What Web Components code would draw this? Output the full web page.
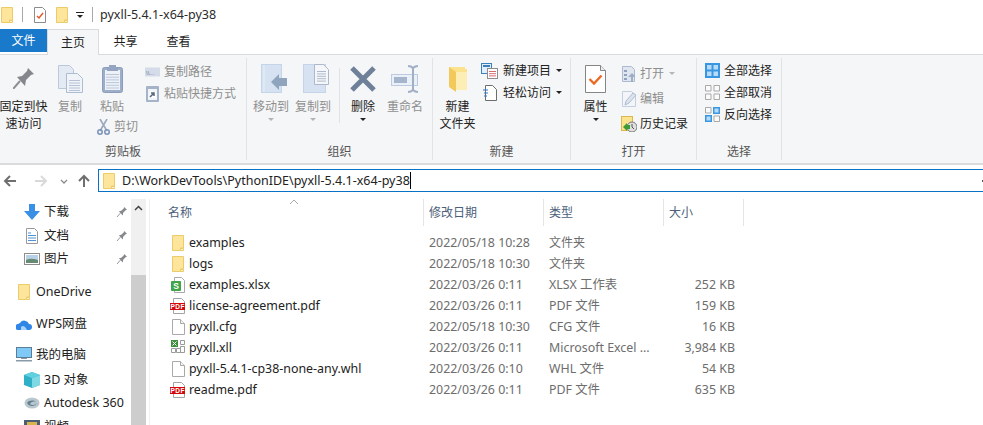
<!DOCTYPE html>
<html lang="zh"><head><meta charset="utf-8"><title>pyxll</title>
<style>
html,body{margin:0;padding:0;height:425px;overflow:hidden;background:#fff}
body{font:12px/17px "Noto Sans","Noto Sans CJK SC",sans-serif;color:#1e1e1e;display:flex;flex-direction:column}
</style></head><body>
<x-titlebar title-text="pyxll-5.4.1-x64-py38"></x-titlebar>
<x-tabs></x-tabs>
<x-ribbon>
  <x-group label="剪贴板" w="247">
    <x-big icon="pin" w="47" mode="on2">固定到快<br>速访问</x-big>
    <x-big icon="copy" w="46" mode="off">复制</x-big>
    <x-big icon="paste" w="38" mode="off">粘贴<x-small slot="after" icon="scissors" mode="off" g="2" ml="2">剪切</x-small></x-big>
    <x-col pad="5" gap="5" ml="13">
      <x-small icon="path" mode="off" g="3">复制路径</x-small>
      <x-small icon="shortcut" mode="off" g="3">粘贴快捷方式</x-small>
    </x-col>
  </x-group>
  <x-group label="组织" w="186" pl="3">
    <x-big icon="moveto" w="42" mode="off" arrow="1" shift="6">移动到</x-big>
    <x-big icon="copyto" w="42" mode="off" arrow="1" shift="6">复制到</x-big>
    <x-vsep></x-vsep>
    <x-big icon="delete" w="42" arrow="1">删除</x-big>
    <x-big icon="rename" w="42" mode="off">重命名</x-big>
  </x-group>
  <x-group label="新建" w="138" pl="1">
    <x-big icon="folderbig" w="47">新建<br>文件夹</x-big>
    <x-col pad="4" gap="5" ml="0">
      <x-small icon="newitem" caret="1">新建项目</x-small>
      <x-small icon="easy" caret="1">轻松访问</x-small>
    </x-col>
  </x-group>
  <x-group label="打开" w="126">
    <x-big icon="props" w="49" arrow="1">属性</x-big>
    <x-col pad="7" gap="8" ml="0">
      <x-small icon="open" mode="off" caret="2" g="3">打开</x-small>
      <x-small icon="edit" mode="off" g="3">编辑</x-small>
      <x-small icon="history" g="3">历史记录</x-small>
    </x-col>
  </x-group>
  <x-group label="选择" w="85">
    <x-col pad="4" gap="5" ml="7">
      <x-small icon="selall" g="3">全部选择</x-small>
      <x-small icon="selnone" g="3">全部取消</x-small>
      <x-small icon="selinv" g="3">反向选择</x-small>
    </x-col>
  </x-group>
</x-ribbon>
<x-addressbar path="D:\WorkDevTools\PythonIDE\pyxll-5.4.1-x64-py38"></x-addressbar>
<x-main>
  <x-nav slot="nav">
    <x-navitem icon="download" indent="24" top="3" pinned="1">下载</x-navitem>
    <x-navitem icon="docs" indent="24" top="7" pinned="1">文档</x-navitem>
    <x-navitem icon="pics" indent="24" top="6" pinned="1">图片</x-navitem>
    <x-navitem icon="folder" indent="16" top="16">OneDrive</x-navitem>
    <x-navitem icon="cloud" indent="16" top="15">WPS网盘</x-navitem>
    <x-navitem icon="pc" indent="16" top="14">我的电脑</x-navitem>
    <x-navitem icon="cube" indent="24" top="8">3D 对象</x-navitem>
    <x-navitem icon="autodesk" indent="24" top="6">Autodesk 360</x-navitem>
    <x-navitem icon="video" indent="24" top="7">视频</x-navitem>
  </x-nav>
  <x-files slot="files">
    <x-filerow icon="folder" name="examples" date="2022/05/18 10:28" type="文件夹"></x-filerow>
    <x-filerow icon="folder" name="logs" date="2022/05/18 10:30" type="文件夹"></x-filerow>
    <x-filerow icon="xlsx" name="examples.xlsx" date="2022/03/26 0:11" type="XLSX 工作表" size="252 KB"></x-filerow>
    <x-filerow icon="pdf" name="license-agreement.pdf" date="2022/03/26 0:11" type="PDF 文件" size="159 KB"></x-filerow>
    <x-filerow icon="file" name="pyxll.cfg" date="2022/05/18 10:30" type="CFG 文件" size="16 KB"></x-filerow>
    <x-filerow icon="xll" name="pyxll.xll" date="2022/03/26 0:11" type="Microsoft Excel ..." size="3,984 KB"></x-filerow>
    <x-filerow icon="file" name="pyxll-5.4.1-cp38-none-any.whl" date="2022/03/26 0:10" type="WHL 文件" size="54 KB"></x-filerow>
    <x-filerow icon="pdf" name="readme.pdf" date="2022/03/26 0:11" type="PDF 文件" size="635 KB"></x-filerow>
  </x-files>
</x-main>
<script>
const FOLDER=`<path d="M.5.5h11v12.500h-3v2.500h-8z" fill="#fde59b" stroke="#eccb6a"/><path d="M8.500 13.500h3v2h-3z" fill="#fff3c4" stroke="#eccb6a"/>`;
const lines=(x,y,w,n,step,c)=>{let s='';for(let i=0;i<n;i++)s+=`<path d="M${x} ${y+i*step+.5}h${w}" stroke="${c}"/>`;return s};
const PINPATH=`<path d="M0 21l7-8" stroke="#8d8f93" stroke-width="2"/><path d="M4 9l5-1 5-5 1-3 6 6-3 1-5 5-1 6z" fill="#84878c"/>`;
const ICONS={
 folder:[12,16,FOLDER],
 check:[12,16,`<path d="M.5.5h8l3 3v12h-11z" fill="#fff" stroke="#8c8c8c"/><path d="M3 9l2 2 4-5" fill="none" stroke="#e0582a" stroke-width="1.500"/>`],
 pin:[21,21,PINPATH],
 copy:[25,28,`<path d="M.5.5h11l4 4v19h-15z" fill="#e4eaf3" stroke="#bcc8da"/><path d="M8.500 8.500h11l5 5v14h-16z" fill="#f0f3f8" stroke="#aebcd2"/>${lines(11,15,11,5,2.5,'#b6c2d5')}`],
 paste:[21,29,`<rect x=".5" y="3.500" width="20" height="25" rx="2" fill="#9daec9" stroke="#8b9dbb"/><rect x="3" y="6" width="15" height="20" fill="#eef2f8"/>${lines(4,10,13,6,2.7,'#b9c6da')}<path d="M7 4V1h7v3h2v3H5V4z" fill="#94a5c2"/>`],
 scissors:[13,16,`<path d="M3 0l7 12M10 0L3 12" stroke="#9aa8bf" stroke-width="1.600" fill="none"/><circle cx="3" cy="13" r="2.200" fill="none" stroke="#7e94b9" stroke-width="1.600"/><circle cx="10" cy="13" r="2.200" fill="none" stroke="#7e94b9" stroke-width="1.600"/>`],
 path:[15,10,`<rect width="15" height="9" y=".5" fill="#d4dcea"/><text x="1" y="7.500" font-size="6" fill="#6d7b92" font-family="Liberation Sans">\\\\...</text>`],
 shortcut:[13,16,`<rect width="13" height="16" rx="1" fill="#a5b3c9"/><rect x="2" y="3" width="9" height="11" fill="#f1f4f8"/><path d="M4 5h3v1h3v6H4z" fill="#fff"/><path d="M4 11l3-3M5 7h3v3" stroke="#56647a" stroke-width="1.500" fill="none"/>`],
 moveto:[26,29,`<rect x=".5" y=".5" width="20" height="28" fill="#d6e2f1" stroke="#c5d5e9"/><path d="M3 1v27" stroke="#e8eff8"/><path d="M10 20l8-8v4h8v8h-8v4z" fill="#8fa5be" transform="translate(0 -2)"/>`],
 copyto:[26,29,`<rect x=".5" y=".5" width="22" height="28" fill="#d6e2f1" stroke="#c5d5e9"/><path d="M11.500.5h9l5 5v15h-14z" fill="#f4f6f9" stroke="#adb9ca"/>${lines(14,7,9,5,2.4,'#aebacb')}`],
 delete:[26,26,`<path d="M2 2l22 22M24 2L2 24" stroke="#6f8199" stroke-width="5"/>`],
 rename:[28,28,`<rect x=".5" y="9.500" width="26" height="11" fill="#eaf0f8" stroke="#bccbdf"/><rect x="3" y="12" width="13" height="6" fill="#a5b6cc"/><path d="M17 1c3 0 4 1 5 2 1-1 2-2 5-2M22 3v22M17 27c3 0 4-1 5-2 1 1 2 2 5 2" stroke="#a0afc3" stroke-width="2" fill="none"/>`],
 folderbig:[18,26,`<path d="M0 1h16v2h2v21H6z" fill="#fde28e"/><path d="M0 1l7 5v20l-7-5z" fill="#f3c95c"/><path d="M7 6h11v18H7z" fill="#fdeeb5"/>`],
 newitem:[17,16,`<rect x=".5" y=".5" width="10" height="10" fill="#e2eefb" stroke="#3d7fb8"/><rect x="2" y="2" width="7" height="2" fill="#3d7fb8"/><rect x="6.500" y="5.500" width="10" height="10" fill="#fff" stroke="#8d8d8d"/>${lines(8,8,7,3,2.2,'#d46b73')}`],
 easy:[14,16,`<path d="M2.500.5h7l4 4v11h-11z" fill="#fff" stroke="#6d6d6d"/><path d="M0 5h5M1 8h4M1 11h3" stroke="#2a78c8"/>`],
 props:[21,28,`<path d="M.5.5h15l5 5v22h-20z" fill="#fff" stroke="#858585"/><path d="M15.500.5v5h5" fill="#eee" stroke="#858585"/><path d="M4.500 14l4.500 4.500 7.500-8" fill="none" stroke="#ea6a24" stroke-width="2.400"/>`],
 open:[13,16,`<path d="M.5.5h9l3 3v12h-12z" fill="#dfe6f0" stroke="#adbbd0"/><path d="M2 4h3v2H2zM2 8h3v2H2zM2 12h3v2H2z" fill="#8fa1bd"/><path d="M10 7l4 4h-3v5H9v-5H6z" fill="#9cadc5"/>`],
 edit:[14,16,`<path d="M.5.5h9l4 4v11h-13z" fill="#f3f5f9" stroke="#c3cedf"/><path d="M3 14l1-4 7-8 3 2-7 8z" fill="#dbe3ef" stroke="#aebcd0"/>`],
 history:[16,16,`<rect x=".5" y=".5" width="11" height="14" fill="#fbe28c" stroke="#d8b84f"/><circle cx="11" cy="11" r="5" fill="#dfdfdf" stroke="#777"/><path d="M11 8v3l2 2" stroke="#555" fill="none"/><path d="M2 11l4-4v2h3v4H6v2z" fill="#3d9c35"/>`],
 selall:[15,15,`<path d="M0 0h15v15H0z" fill="#3b96e2"/><path d="M2 2h4.500v4.500H2zM8.500 2H13v4.500H8.500zM2 8.500h4.500V13H2zM8.500 8.500H13V13H8.500z" fill="#b7dcf7"/>`],
 selnone:[15,15,`<path d="M.5.5h5.500V6H.5zM9 .5h5.500V6H9zM.5 9H6v5.500H.5zM9 9h5.500v5.500H9z" fill="#fbfbfb" stroke="#a9a9a9"/>`],
 selinv:[15,15,`<path d="M.5.5h5.500V6H.5zM9 9h5.500v5.500H9z" fill="#fbfbfb" stroke="#a9a9a9"/><path d="M8 0h7v7H8zM0 8h7v7H0z" fill="#3b96e2"/><path d="M9.500 1.500h4v4h-4zM1.500 9.500h4v4h-4z" fill="#b7dcf7"/>`],
 download:[16,16,`<path d="M5 0h6v7h5l-8 9-8-9h5z" fill="#3a90e4"/>`],
 docs:[12,16,`<path d="M.5.5h8l3 3v12H.5z" fill="#fff" stroke="#999"/><path d="M2 5h3M2 7.500h8M2 10h8M2 12.500h8" stroke="#4f92d3"/>`],
 pics:[16,12,`<rect x=".5" y=".5" width="15" height="11" fill="#fff" stroke="#8d8d8d"/><rect x="2" y="2" width="12" height="5" fill="#b7d2e8"/><path d="M2 7c4-2 8-1 12 0v3H2z" fill="#668a72"/>`],
 pin2:[10,10,`<g transform="scale(.476)">${PINPATH}</g>`],
 cloud:[16,12,`<path d="M3 12a3 3 0 0 1-1-6l2-1a5 5 0 0 1 9 1 3 3 0 0 1 0 6z" fill="#2f86e6"/><path d="M5 9c2-2 4-1 6 3H5z" fill="#a9d2f7"/>`],
 pc:[16,15,`<rect x=".5" y=".5" width="15" height="10" fill="#7ec9f5" stroke="#5d7c96"/><path d="M5 11h6v1H5zM0 13h16v1.600H0z" fill="#8a9aa8"/>`],
 cube:[16,16,`<path d="M8 0l8 3v10l-8 3-8-3V3z" fill="#2fb0c6"/><path d="M8 6l8-3v10l-8 3z" fill="#7fd9e5"/><path d="M8 6L0 3l8-3 8 3z" fill="#5fd0df"/>`],
 autodesk:[16,13,`<ellipse cx="8" cy="7" rx="7.500" ry="5.500" fill="#b9c8cf"/><path d="M3 7c2-3 7-3 9-1-3-1-5 0-6 2 2 2 5 1 7-1-2 4-8 4-10 0z" fill="#64808e"/>`],
 video:[16,14,`<rect width="16" height="14" fill="#4d5d74"/><rect x="3" y="2" width="10" height="10" fill="#d9b44c"/>`],
 xlsx:[14,16,`<path d="M3.500.5h7l3 3v12h-10z" fill="#fff" stroke="#a9a9a9"/><rect y="4" width="10" height="10" rx="1" fill="#3fa548"/><text x="5" y="12" font-size="8.500" font-weight="700" text-anchor="middle" fill="#fff" font-family="Liberation Sans">S</text>`],
 pdf:[16,16,`<path d="M3.500.5h8l3 3v12h-11z" fill="#fff" stroke="#a3a3a3"/><rect y="5" width="15" height="7" fill="#d3060c"/><text x=".5" y="11" font-size="6.500" font-weight="700" fill="#fff" font-family="Liberation Sans" textLength="14">PDF</text>`],
 file:[13,16,`<path d="M.5.500h8l4 4v11H.5z" fill="#fff" stroke="#a9a9a9"/><path d="M8.500.5v4h4" fill="#f2f2f2" stroke="#a9a9a9"/>`],
 xll:[14,15,`<rect width="7" height="7" fill="#3f8f3c"/><path d="M1.500 1.500l4 4M5.500 1.500l-4 4" stroke="#fff"/><path d="M9.500.5h4v4h-4zM.5 8.500h4v4h-4zM5.500 8.500h4v4h-4zM9.500 6.500h4v6h-4z" fill="#fff" stroke="#9b9b9b"/>`]
};
const svg=n=>{const [w,h,b]=ICONS[n];return `<svg xmlns="http://www.w3.org/2000/svg" width="${w}" height="${h}" viewBox="0 0 ${w} ${h}" style="display:block;flex:none">${b}</svg>`};
const caretSvg=(c='#222')=>`<svg width="6" height="3" viewBox="0 0 6 3" style="display:block;flex:none"><path d="M0 0h6L3 3z" fill="${c}"/></svg>`;
function def(name,render){customElements.define(name,class extends HTMLElement{connectedCallback(){if(!this.shadowRoot){this.attachShadow({mode:'open'}).innerHTML=render(this)}}})}
const A=(e,k,d='')=>e.getAttribute(k)??d;

def('x-titlebar',e=>`<style>:host{display:flex;align-items:center;height:29px;flex:none;background:#fff;font-size:12.500px;color:#2b2b2b}
.s{width:1px;height:15px;background:#a8a8a8}</style>
<span style="margin-left:1px">${svg('folder')}</span><span class="s" style="margin-left:9px"></span>
<span style="margin-left:11px">${svg('check')}</span><span style="margin-left:10px">${svg('folder')}</span>
<span style="margin-left:8px;display:flex;flex-direction:column;gap:2px;align-items:center"><i style="width:8px;height:1px;background:#222;display:block"></i>${caretSvg()}</span>
<span class="s" style="margin-left:8px"></span><span style="margin-left:7px">${A(e,'title-text')}</span>`);

def('x-tabs',()=>`<style>:host{display:flex;height:26px;flex:none;background:#fff;position:relative;box-sizing:border-box;border-bottom:1px solid #dadbdc;font-size:12px}
div{display:flex;align-items:center;justify-content:center;height:25px}
.f{width:47px;height:23px;background:#1979ca;color:#fff;margin-top:0}
.h{width:52px;height:26px;background:#f5f6f7;border:1px solid #dadbdc;border-bottom:0;box-sizing:border-box;z-index:1}
.t{width:53px}</style>
<div class="f">文件</div><div class="h">主页</div><div class="t">共享</div><div class="t">查看</div>`);

def('x-ribbon',()=>`<style>:host{display:flex;height:110px;flex:none;background:#f5f6f7;box-sizing:border-box;border-bottom:2px solid #dadbdc;padding-top:3px}</style><slot></slot>`);

def('x-group',e=>`<style>:host{display:flex;flex-direction:column;width:${A(e,'w')}px;box-sizing:border-box;border-right:1px solid #e1e3e6;height:102px;flex:none;color:#444}
.b{display:flex;flex:1;min-height:0;padding-left:${A(e,'pl','0')}px}.l{height:17px;text-align:center;color:#555}</style>
<div class="b"><slot></slot></div><div class="l">${A(e,'label')}</div>`);

def('x-big',e=>{const off=A(e,'mode')==='off';return `<style>:host{display:flex;flex-direction:column;align-items:center;width:${A(e,'w')}px;flex:none;text-align:center;line-height:17px;color:${off?'#8f8f8f':'#222'};white-space:nowrap}
.i{height:37px;display:flex;align-items:center;justify-content:center;margin-top:2px;margin-bottom:1px;margin-left:${A(e,'shift','0')}px}
.a{margin-top:3px}::slotted([slot=after]){margin-top:3px;align-self:flex-start}</style>
<div class="i">${svg(A(e,'icon'))}</div><div><slot></slot></div>${A(e,'arrow')?`<div class="a">${caretSvg(off?'#b3b3b3':'#222')}</div>`:''}<slot name="after"></slot>`});

def('x-col',e=>`<style>:host{display:flex;flex-direction:column;gap:${A(e,'gap','6')}px;padding-top:${A(e,'pad','5')}px;margin-left:${A(e,'ml','0')}px;flex:none}</style><slot></slot>`);

def('x-small',e=>{const off=A(e,'mode')==='off';const c=A(e,'caret');return `<style>:host{display:flex;align-items:center;gap:${A(e,'g','5')}px;height:17px;margin-left:${A(e,'ml','0')}px;color:${off?'#8f8f8f':'#222'};white-space:nowrap}
.i{width:17px;display:flex;justify-content:center}</style>
<span class="i">${svg(A(e,'icon'))}</span><span><slot></slot></span>${c?`<span style="margin-left:${c==='2'?2:0}px">${caretSvg(c==='2'?'#b5b5b5':'#222')}</span>`:''}`});

def('x-vsep',()=>`<style>:host{display:block;width:1px;height:55px;background:#dfe2e6;margin:10px 2px 0 5px;flex:none}</style>`);

def('x-addressbar',e=>`<style>:host{display:flex;align-items:flex-end;height:27px;flex:none;background:#fff;box-sizing:border-box}
.n{display:flex;align-items:center;width:98px;flex:none;height:23px}
.b{flex:1;height:23px;box-sizing:border-box;border:1px solid #0a72c4;border-right:0;display:flex;align-items:center;padding-left:4px}
.p{margin-left:7px;color:#222;font-size:12.500px;border-right:1px solid #000;line-height:17px}
.dot{margin-left:auto;width:1px;height:2px;background:#555}</style>
<div class="n">
<svg width="98" height="16" viewBox="0 0 98 16"><path d="M16 8H5M10 3L5 8l5 5" fill="none" stroke="#6f6f6f" stroke-width="2"/><path d="M35 8h11M41 3l5 5-5 5" fill="none" stroke="#d9d9d9" stroke-width="2"/><path d="M61 7l3 3 3-3" fill="none" stroke="#8a8a8a" stroke-width="1.300"/><path d="M84 14V3M79 8l5-5 5 5" fill="none" stroke="#6f6f6f" stroke-width="2"/></svg></div>
<div class="b">${svg('folder')}<span class="p">${A(e,'path')}</span><span class="dot"></span></div>`);

def('x-main',()=>`<style>:host{display:flex;flex:1;min-height:0;overflow:hidden;padding-top:7px;background:#fff}
.sb{width:15px;flex:none;background:#f0f0f0;display:flex;flex-direction:column}
.u{height:17px;display:flex;align-items:center;justify-content:center;flex:none;margin-bottom:59px}
.t{flex:1;background:#cdcdcd}.d{width:1px;background:#f0f0f0;margin-left:3px;flex:none}
.f{flex:1;min-width:0}</style>
<div style="width:131px;flex:none;overflow:hidden"><slot name="nav"></slot></div>
<div class="sb"><div class="u"><svg width="9" height="6" viewBox="0 0 9 6"><path d="M1 5l3.500-3.500L8 5" fill="none" stroke="#444" stroke-width="1.500"/></svg></div><div class="t"></div></div>
<div class="d"></div><div class="f"><slot name="files"></slot></div>`);

def('x-nav',()=>`<style>:host{display:block;padding-top:1px}</style><slot></slot>`);
def('x-navitem',e=>`<style>:host{display:flex;align-items:center;height:17px;margin-top:${A(e,'top')}px;padding-left:${A(e,'indent')}px;color:#222;white-space:nowrap;font-size:12.500px}
.i{width:16px;display:flex;justify-content:center;margin-right:4px;flex:none}.p{margin-left:auto;margin-right:4px}</style>
<span class="i">${svg(A(e,'icon'))}</span><span><slot></slot></span>${A(e,'pinned')?`<span class="p">${svg('pin2')}</span>`:''}`);

def('x-files',()=>`<style>:host{display:block;position:relative}
.h{display:flex;height:27px;color:#4c607a;font-size:12px;position:relative}
.h div{box-sizing:border-box;border-right:1px solid #e5e5e5;padding-left:5px;display:flex;align-items:center;flex:none}
.r{padding-top:6px;display:flex;flex-direction:column}
svg.s{position:absolute;left:139px;top:0}</style>
<div class="h"><div style="width:274px;padding-left:18px">名称</div><div style="width:120px">修改日期</div><div style="width:120px">类型</div><div style="width:80px">大小</div><svg class="s" width="10" height="6" viewBox="0 0 10 6"><path d="M1 5l4-4 4 4" fill="none" stroke="#a9a9a9"/></svg></div>
<div class="r"><slot></slot></div>`);

def('x-filerow',e=>{const ty=A(e,'type');return `<style>:host{display:flex;align-items:center;height:21px;white-space:nowrap;font-size:12.400px}
.i{width:16px;margin-left:20px;margin-right:3px;display:flex;justify-content:center;flex:none}
.n{width:240px;color:#222;flex:none}.d{width:120px;flex:none;color:#6d6d6d}.t{width:120px;flex:none;color:#6d6d6d}.z{width:66px;text-align:right;flex:none;color:#6d6d6d}</style>
<span class="i">${svg(A(e,'icon'))}</span><span class="n">${A(e,'name')}</span><span class="d">${A(e,'date')}</span><span class="t"${ty==='文件夹'?' style="font-size:12px"':''}>${ty}</span><span class="z">${A(e,'size')}</span>`});
</script>
</body></html>
